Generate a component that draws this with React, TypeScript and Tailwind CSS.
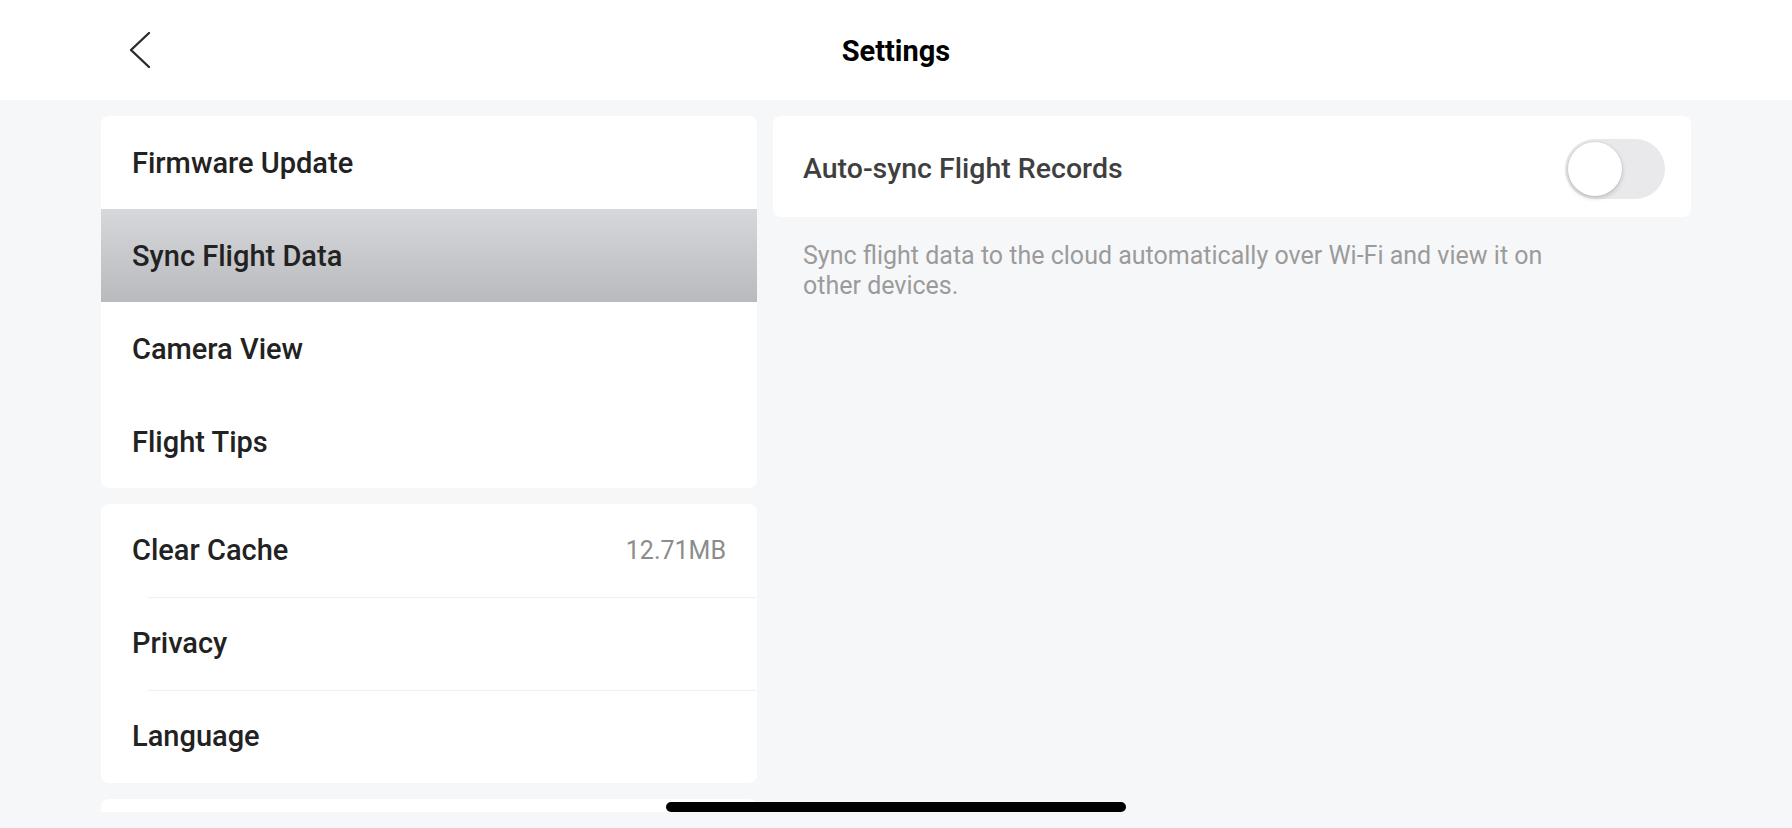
import { useState } from 'react'

const firstGroup = ['Firmware Update', 'Sync Flight Data', 'Camera View', 'Flight Tips']

export default function App() {
  const [selected, setSelected] = useState('Sync Flight Data')
  const [autoSync, setAutoSync] = useState(false)

  return (
    <div
      className="relative h-[828px] w-full overflow-hidden bg-[#f6f7f9]"
      style={{ fontFamily: 'Roboto, "Noto Sans", sans-serif' }}
    >
      {/* 顶部导航 */}
      <header className="relative flex h-[100px] items-center justify-center bg-white">
        <button className="absolute left-[122px] top-[26px] flex h-[48px] w-[36px] items-center justify-center">
          <svg width="24" height="38" viewBox="0 0 24 38" fill="none">
            <polyline
              points="21,2 3,19 21,36"
              stroke="#2b2b2b"
              strokeWidth="2.4"
              strokeLinecap="round"
              strokeLinejoin="round"
            />
          </svg>
        </button>
        <h1 className="mt-[3px] text-[29px] font-bold text-black">Settings</h1>
      </header>

      <main className="flex h-[712px] gap-4 overflow-hidden px-[101px] pt-4">
        {/* 左侧菜单 */}
        <div className="flex w-[656px] shrink-0 flex-col gap-4">
          <div className="shrink-0 overflow-hidden rounded-lg bg-white">
            {firstGroup.map(item => (
              <button
                key={item}
                onClick={() => setSelected(item)}
                className={`flex h-[93px] w-full items-center px-[31px] pt-[2px] text-left text-[29px] font-medium text-[#222] ${
                  selected === item ? 'bg-gradient-to-b from-[#d7d8db] to-[#b9babd]' : ''
                }`}
              >
                {item}
              </button>
            ))}
          </div>

          <div className="shrink-0 overflow-hidden rounded-lg bg-white">
            <div className="flex h-[93px] items-center justify-between px-[31px]">
              <span className="text-[29px] font-medium text-[#222]">Clear Cache</span>
              <span className="text-[25px] text-[#8c8c8c]">12.71MB</span>
            </div>
            <div className="ml-[46px] h-px bg-[#f1f1f3]" />
            <div className="flex h-[92px] items-center px-[31px]">
              <span className="text-[29px] font-medium text-[#222]">Privacy</span>
            </div>
            <div className="ml-[46px] h-px bg-[#f1f1f3]" />
            <div className="flex h-[92px] items-center px-[31px]">
              <span className="text-[29px] font-medium text-[#222]">Language</span>
            </div>
          </div>

          <div className="h-[93px] shrink-0 rounded-lg bg-white" />
        </div>

        {/* 右侧详情 */}
        <div className="flex w-[918px] shrink-0 flex-col">
          <div className="flex h-[101px] items-center justify-between rounded-lg bg-white pl-[30px] pr-[26px] pt-[5px]">
            <span className="text-[28.5px] font-medium text-[#3f3f3f]">Auto-sync Flight Records</span>
            <button
              onClick={() => setAutoSync(!autoSync)}
              className={`flex h-[60px] w-[100px] items-center rounded-full p-[3px] ${
                autoSync ? 'justify-end bg-[#2f7cf6]' : 'justify-start bg-[#e9e9eb]'
              }`}
            >
              <span className="h-[54px] w-[54px] rounded-full bg-white shadow-[0_2px_5px_rgba(0,0,0,0.18),0_0_0_1px_rgba(0,0,0,0.04)]" />
            </button>
          </div>
          <p className="mt-[24px] w-[790px] pl-[30px] text-[25px] leading-[30px] text-[#9b9b9b]">
            Sync flight data to the cloud automatically over Wi-Fi and view it on other devices.
          </p>
        </div>
      </main>

      {/* Home indicator */}
      <div className="absolute bottom-[16px] left-1/2 h-[10px] w-[460px] -translate-x-1/2 rounded-full bg-black" />
    </div>
  )
}
